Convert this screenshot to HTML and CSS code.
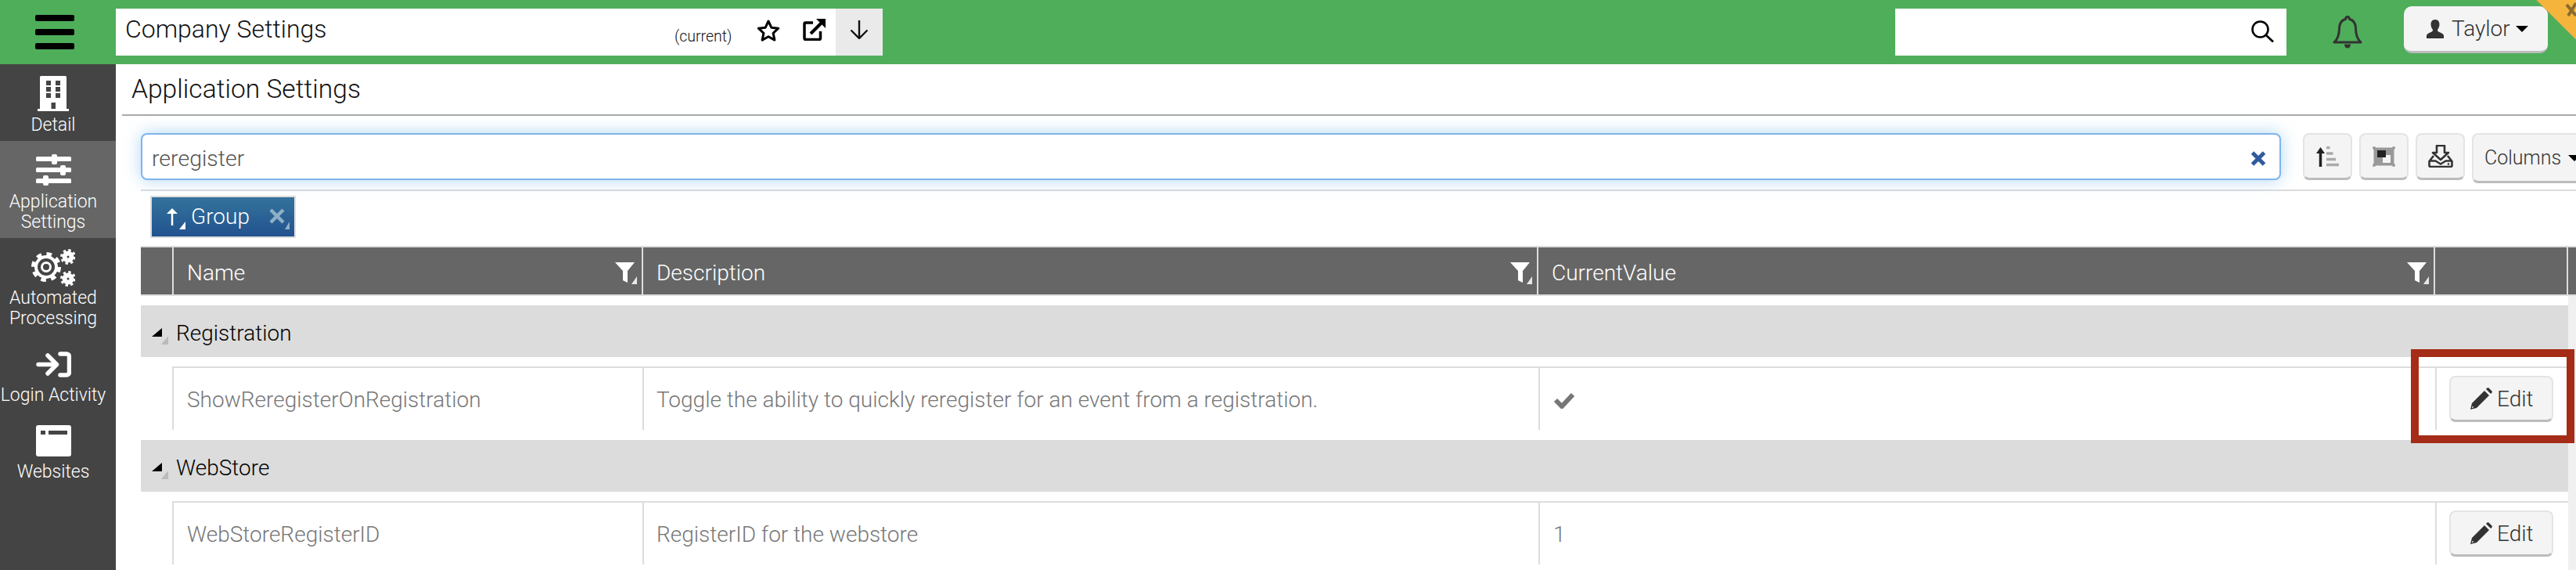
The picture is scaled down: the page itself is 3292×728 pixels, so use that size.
FILE: index.html
```html
<!DOCTYPE html>
<html lang="en">
<head>
<meta charset="utf-8">
<title>Application Settings</title>
<link rel="stylesheet" href="styles.css">
</head>
<body>
<div class="app">
  <header class="topbar">
    <div class="burger-cell">
      <div class="burger"><span></span><span></span><span></span></div>
    </div>
    <div class="titlebox">
      <span class="title-text">Company Settings</span>
      <span class="title-current">(current)</span>
      <svg class="ic-star" viewBox="0 0 30 28"><path d="M15 2l3.800 8.200 8.900 1-6.600 6.100 1.800 8.800L15 21.700l-7.900 4.400 1.800-8.800-6.600-6.100 8.900-1z" fill="none" stroke="#000" stroke-width="3" stroke-linejoin="round"/></svg>
      <svg class="ic-ext" viewBox="0 0 29 28"><path d="M13 5H3.500A1.500 1.500 0 0 0 2 6.500V25a1.500 1.500 0 0 0 1.500 1.500H21a1.500 1.500 0 0 0 1.500-1.500V16" fill="none" stroke="#000" stroke-width="3.500"/><path d="M10 19L24 5" stroke="#000" stroke-width="4" fill="none"/><path d="M17 0h12v12z"/></svg>
      <div class="title-down"><svg viewBox="0 0 24 24"><path d="M12 0v23M1.500 12.500L12 23 22.500 12.500" fill="none" stroke="#111" stroke-width="2.400"/></svg></div>
    </div>
    <div class="topbar-space"></div>
    <div class="globalsearch">
      <svg viewBox="0 0 29 28"><circle cx="11.500" cy="11.500" r="10" fill="none" stroke="#000" stroke-width="2.600"/><path d="M18.500 18.500L28 27.500" stroke="#000" stroke-width="2.800"/></svg>
    </div>
    <svg class="ic-bell" viewBox="0 0 38 42"><path d="M19 1.500c-1.500 0-2.300 1-2.300 2.800C11 6 8.500 10.500 8.500 16c0 7-1.500 13.500-6.500 18h34c-5-4.500-6.500-11-6.500-18 0-5.500-2.500-10-8.200-11.700 0-1.800-.8-2.800-2.300-2.800z" fill="none" stroke="#333" stroke-width="3" stroke-linejoin="round"/><path d="M15 36.500h8c0 3-1.500 5-4 5s-4-2-4-5z" fill="#333"/></svg>
    <button class="userbtn">
      <svg class="ic-person" viewBox="0 0 24 24"><path d="M12 0c3.800 0 5.500 2.800 5.500 6 0 2.800-1 5-2.200 6.500-.6.800-.4 2 .6 2.700 2.500 1.500 6.100 2.300 7.100 4.800V24H1v-4c1-2.500 4.600-3.300 7.100-4.800 1-.7 1.200-1.900.6-2.700C7.500 11 6.500 8.800 6.500 6c0-3.200 1.700-6 5.500-6z" fill="#333"/></svg>
      <span>Taylor</span><i class="caret"></i>
    </button>
    <svg class="ribbon" viewBox="0 0 52 52"><path d="M1 0h51v51z" fill="#c9a04a"/><path d="M2 0h50v50z" fill="#f5b53d"/><path d="M40 6l12 14M52 4L42 20" stroke="#8a6a33" stroke-width="4" fill="none"/></svg>
  </header>
  <div class="below">
    <nav class="sidenav">
      <a class="nav-item nav-detail">
        <svg class="nav-ic" width="40" height="45" viewBox="0 0 40 45"><path d="M3 1.500A1.500 1.500 0 0 1 4.500 0h31A1.500 1.500 0 0 1 37 1.500V42h3v3H0v-3h3z" fill="#fff"/><path d="M11 6h6v6h-6zM23 6h6v6h-6zM11 14h6v6h-6zM23 14h6v6h-6zM11 22h6v6h-6zM23 22h6v6h-6zM17.500 34h5.500v8h-5.500z" fill="#444"/></svg>
        <span class="nav-label">Detail</span>
      </a>
      <a class="nav-item nav-app active">
        <svg class="nav-ic" width="45" height="40" viewBox="0 0 45 40"><g fill="#fff"><rect y="3" width="45" height="6" rx="1.500"/><rect x="20" width="7" height="13" rx="2"/><rect y="17" width="45" height="6" rx="1.500"/><rect x="31" y="14" width="7" height="13" rx="2"/><rect y="31" width="45" height="6" rx="1.500"/><rect x="9" y="27" width="7" height="13" rx="2"/></g></svg>
        <span class="nav-label">Application<br>Settings</span>
      </a>
      <a class="nav-item nav-auto">
        <svg class="nav-ic" width="56" height="48" viewBox="0 0 56 48"><g fill="none" stroke="#fff"><circle cx="19" cy="23" r="13" stroke-width="4"/><circle cx="19" cy="23" r="16.500" stroke-width="5" stroke-dasharray="6.500 6.460"/><circle cx="19" cy="23" r="5.500" stroke-width="3"/><circle cx="47" cy="10" r="4.500" stroke-width="6"/><circle cx="47" cy="10" r="8.300" stroke-width="3.400" stroke-dasharray="3.300 3.220"/><circle cx="47" cy="38" r="4.500" stroke-width="6"/><circle cx="47" cy="38" r="8.300" stroke-width="3.400" stroke-dasharray="3.300 3.220"/></g></svg>
        <span class="nav-label">Automated<br>Processing</span>
      </a>
      <a class="nav-item nav-login">
        <svg class="nav-ic" width="45" height="33" viewBox="0 0 45 33"><g fill="none" stroke="#fff" stroke-width="5.500" stroke-linecap="round" stroke-linejoin="round"><path d="M3 16.500h22M15 5l11.500 11.500L15 28"/><path d="M31 3h8a3.500 3.500 0 0 1 3.500 3.500v20A3.500 3.500 0 0 1 39 30h-8"/></g></svg>
        <span class="nav-label">Login Activity</span>
      </a>
      <a class="nav-item nav-web">
        <svg class="nav-ic" width="45" height="40" viewBox="0 0 45 40"><rect width="45" height="40" rx="3" fill="#fff"/><path d="M6 7h6v5H6zM16 7h24v5H16z" fill="#444"/></svg>
        <span class="nav-label">Websites</span>
      </a>
    </nav>
    <main class="main">
      <h1 class="page-title">Application Settings</h1>
      <div class="content">
        <div class="toolbar">
          <div class="filterbox">
            <input class="filterinput" type="text" value="reregister">
            <svg viewBox="0 0 20 19"><path d="M2.500 2l15 15M17.500 2l-15 15" stroke="#2f5a9e" stroke-width="5" fill="none"/></svg>
          </div>
          <button class="toolbtn">
            <svg class="tool-ic" viewBox="0 0 29 26"><path d="M5.500 26V7" stroke="#222" stroke-width="3.500"/><path d="M0 9l5.500-8 5.500 8z" fill="#222"/><path d="M13 1.500h4.500M13 9h8.500M13 16.500h12M13 23.500h16" stroke="#aaa" stroke-width="3.500"/></svg>
          </button>
          <button class="toolbtn">
            <svg class="tool-ic" viewBox="0 0 29 26"><rect x="1.500" y="1.500" width="26" height="23" fill="#999"/><circle cx="2" cy="2" r="2" fill="#999"/><circle cx="27" cy="2" r="2" fill="#999"/><circle cx="2" cy="24" r="2" fill="#999"/><circle cx="27" cy="24" r="2" fill="#999"/><rect x="13" y="11" width="10" height="10" fill="#f4f4f4"/><rect x="6" y="5" width="11" height="9" fill="#222"/></svg>
          </button>
          <button class="toolbtn">
            <svg class="tool-ic tool-ic-dl" viewBox="0 0 32 29"><path d="M11 1h10v9h5L16 19 6 10h5z" fill="none" stroke="#333" stroke-width="2.600" stroke-linejoin="round"/><path d="M7 14L1.500 21v5.500A1.500 1.500 0 0 0 3 28h26a1.500 1.500 0 0 0 1.500-1.500V21L25 14M1.500 20.500h8l6.500 4 6.500-4h8" fill="none" stroke="#333" stroke-width="2.600" stroke-linejoin="round"/><circle cx="26" cy="24.500" r="1.300" fill="#333"/></svg>
          </button>
          <button class="columnsbtn"><span>Columns</span><i class="caret"></i></button>
        </div>
        <div class="chipbar">
          <div class="chip">
            <svg class="chip-arrow" viewBox="0 0 14 22"><path d="M7 5v17" stroke="#fff" stroke-width="2.500"/><path d="M0 7l7-7 7 7z" fill="#fff"/></svg>
            <svg class="corner corner-chip" viewBox="0 0 8 10"><path d="M8 0v10H0z" fill="#fff"/></svg>
            <span class="chip-text">Group</span>
            <svg class="chip-x" viewBox="0 0 20 20"><path d="M2 2l16 16M18 2L2 18" stroke="#8fb0c8" stroke-width="4.500"/></svg>
            <svg class="corner corner-chip2" viewBox="0 0 6 10"><path d="M6 0v10H0z" fill="#8fb0c8"/></svg>
          </div>
        </div>
        <div class="grid-head">
          <div class="hcell"></div>
          <div class="hcell"><span>Name</span><svg class="ic-filter" viewBox="0 0 28 28"><path d="M0 0h25L16 11v15l-6-3V11z" fill="#fff"/><path d="M28 18v10h-7z" fill="#e8e8e8"/></svg></div>
          <div class="hcell"><span>Description</span><svg class="ic-filter" viewBox="0 0 28 28"><path d="M0 0h25L16 11v15l-6-3V11z" fill="#fff"/><path d="M28 18v10h-7z" fill="#e8e8e8"/></svg></div>
          <div class="hcell"><span>CurrentValue</span><svg class="ic-filter" viewBox="0 0 28 28"><path d="M0 0h25L16 11v15l-6-3V11z" fill="#fff"/><path d="M28 18v10h-7z" fill="#e8e8e8"/></svg></div>
          <div class="hcell"></div>
          <div class="hcell hcell-end"></div>
        </div>
        <div class="grid-scroll">
          <div class="grid-body">
            <div class="group-row">
              <svg class="ic-collapse" viewBox="0 0 21 21"><path d="M13 0v11H0z" fill="#000"/><path d="M21 10v11H12z" fill="#bbb"/></svg>
              <span>Registration</span>
            </div>
            <div class="data-row">
              <div class="dcell">ShowReregisterOnRegistration</div>
              <div class="dcell">Toggle the ability to quickly reregister for an event from a registration.</div>
              <div class="dcell"><svg class="ic-check" viewBox="0 0 28 22"><path d="M3 11l8 8L25 4" fill="none" stroke="#777" stroke-width="6"/></svg></div>
              <div class="dcell dcell-action">
                <button class="editbtn"><svg viewBox="0 0 28 28"><path d="M0 28l2-8L18 4l6 6L8 26z" fill="#333"/><path d="M20 2l1.500-1.500a1.500 1.500 0 0 1 2 0l4 4a1.500 1.500 0 0 1 0 2L26 8z" fill="#333"/><path d="M2.500 24.500l1 1" stroke="#f4f4f4" stroke-width="2"/></svg><span>Edit</span></button>
              </div>
              <div class="callout"></div>
            </div>
            <div class="group-row">
              <svg class="ic-collapse" viewBox="0 0 21 21"><path d="M13 0v11H0z" fill="#000"/><path d="M21 10v11H12z" fill="#bbb"/></svg>
              <span>WebStore</span>
            </div>
            <div class="data-row">
              <div class="dcell">WebStoreRegisterID</div>
              <div class="dcell">RegisterID for the webstore</div>
              <div class="dcell">1</div>
              <div class="dcell dcell-action">
                <button class="editbtn"><svg viewBox="0 0 28 28"><path d="M0 28l2-8L18 4l6 6L8 26z" fill="#333"/><path d="M20 2l1.500-1.500a1.500 1.500 0 0 1 2 0l4 4a1.500 1.500 0 0 1 0 2L26 8z" fill="#333"/><path d="M2.500 24.500l1 1" stroke="#f4f4f4" stroke-width="2"/></svg><span>Edit</span></button>
              </div>
            </div>
          </div>
          <div class="scrolltrack"></div>
        </div>
      </div>
    </main>
  </div>
</div>
</body>
</html>
```
FILE: styles.css
```css
* { box-sizing: border-box; }
html, body { margin: 0; padding: 0; height: 100%; overflow: hidden; background: #fff; }
body { font-family: Roboto, "Liberation Sans", sans-serif; font-weight: 300; font-size: 28px; color: #333; }
button { font: inherit; color: inherit; cursor: pointer; }
svg { display: block; flex: none; }

.app { width: 3292px; height: 728px; display: flex; flex-direction: column; overflow: hidden; }

/* top bar */
.topbar { position: relative; flex: none; height: 82px; background: #4fae5a; display: flex; align-items: center; }
.burger-cell { width: 148px; flex: none; padding-left: 45px; }
.burger { width: 50px; display: flex; flex-direction: column; gap: 10px; }
.burger span { display: block; height: 8px; border-radius: 2px; background: #000; }
.titlebox { width: 980px; height: 60px; flex: none; background: #fff; display: flex; align-items: center; padding-left: 12px; color: #111; }
.title-text { font-size: 32px; line-height: 52px; width: 702px; flex: none; align-self: flex-start; }
.title-current { font-size: 19.5px; line-height: 60px; padding-top: 11px; width: 105px; flex: none; }
.ic-star { width: 30px; height: 28px; margin-right: 29px; margin-top: -4px; }
.ic-ext { width: 29px; height: 28px; margin-right: 13px; margin-top: -6px; }
.title-down { width: 60px; height: 60px; background: #eaeaea; display: flex; align-items: center; justify-content: center; }
.title-down svg { width: 24px; height: 24px; margin-top: -6px; }
.topbar-space { flex: 1; }
.globalsearch { width: 500px; height: 60px; flex: none; background: #fff; display: flex; align-items: center; justify-content: flex-end; padding-right: 16px; }
.globalsearch svg { width: 29px; height: 28px; margin-top: -2px; }
.ic-bell { width: 38px; height: 42px; margin-left: 59px; margin-right: 53px; }
.userbtn { width: 184px; height: 60px; margin-right: 36px; margin-top: -6px; background: #f4f4f4; border: 0; border-bottom: 3px solid #bcbcbc; border-radius: 10px; display: flex; align-items: center; padding: 0 0 0 28px; color: #333; }
.ic-person { width: 24px; height: 24px; margin-right: 9px; }
.caret { display: block; width: 0; height: 0; border-left: 8px solid transparent; border-right: 8px solid transparent; border-top: 8px solid #000; margin-left: 7px; }
.ribbon { position: absolute; right: 0; top: 0; width: 52px; height: 52px; }

/* layout below the bar */
.below { flex: 1; display: flex; min-height: 0; }
.sidenav { width: 148px; flex: none; background: #444; color: #fff; font-size: 23px; line-height: 26px; }
.nav-item { display: flex; flex-direction: column; align-items: center; padding-right: 12px; text-align: center; }
.nav-item.active { background: #666; }
.nav-detail { height: 98px; padding-top: 15px; }
.nav-app { height: 124px; padding-top: 17px; }
.nav-auto { height: 127px; padding-top: 14px; }
.nav-login { height: 99px; padding-top: 18px; }
.nav-web { padding-top: 13px; }
.nav-label { display: block; white-space: nowrap; }
.nav-detail .nav-label { margin-top: 5px; }
.nav-app .nav-label { margin-top: 8px; }
.nav-auto .nav-label { margin-top: 2px; }
.nav-login .nav-label { margin-top: 10px; }
.nav-web .nav-label { margin-top: 7px; }

.main { flex: 1; min-width: 0; padding-left: 8px; overflow: hidden; }
.page-title { margin: 0; height: 66px; padding-left: 12px; font-size: 33.6px; font-weight: 300; line-height: 64px; color: #111; border-bottom: 2px solid #aaa; }
.content { margin-left: 24px; margin-top: 22px; width: 3112px; }

/* toolbar */
.toolbar { display: flex; align-items: flex-start; border-bottom: 2px solid #ddd; height: 74px; }
.filterbox { width: 2735px; height: 60px; flex: none; border: 2px solid #7fb5ec; border-radius: 8px; box-shadow: 0 0 20px rgba(102,175,233,.5); background: #fff; display: flex; align-items: center; padding: 0 17px 0 12px; }
.filterinput { flex: 1; min-width: 0; border: 0; outline: 0; background: transparent; padding: 4px 0 0; font: inherit; font-size: 28.5px; color: #555; }
.filterbox svg { width: 20px; height: 19px; margin-top: 4px; }
.toolbtn { width: 63px; height: 60px; flex: none; margin-left: 9px; padding: 0; background: #f4f4f4; border: 2px solid #e4e4e4; border-bottom: 3px solid #bcbcbc; border-radius: 8px; display: flex; align-items: center; justify-content: center; }
.toolbtn:first-of-type { margin-left: 28px; }
.tool-ic { width: 29px; height: 26px; }
.tool-ic-dl { width: 32px; height: 29px; }
.columnsbtn { width: 150px; height: 64px; flex: none; margin-left: 9px; background: #f4f4f4; border: 2px solid #e4e4e4; border-bottom: 3px solid #bcbcbc; border-radius: 8px; display: flex; align-items: center; padding: 0 0 0 14px; color: #333; font-size: 25px; }
.columnsbtn .caret { margin-left: 9px; }

/* group chip */
.chipbar { height: 70px; padding: 6px 0 0 12px; }
.chip { width: 186px; height: 54px; border: 2px solid #ddd; background: linear-gradient(#33739c, #22528f); color: #fff; display: flex; align-items: center; padding-left: 19px; }
.chip-arrow { width: 14px; height: 22px; margin-top: 0; }
.corner { align-self: flex-end; }
.corner-chip { width: 8px; height: 10px; margin: 0 7px 9px 2px; }
.chip-text { line-height: 1; margin-right: 25px; }
.chip-x { width: 20px; height: 20px; margin-top: -2px; }
.corner-chip2 { width: 6px; height: 10px; margin-bottom: 9px; }

/* grid */
.grid-head { display: grid; grid-template-columns: 42px 600px 1144px 1146px 170px 10px; height: 64px; border-top: 2px solid #ddd; border-bottom: 2px solid #ddd; background: #666; color: #fff; }
.hcell { border-right: 2px solid #ddd; display: flex; align-items: center; justify-content: space-between; padding: 4px 6px 0 17px; }
.hcell-end { border-right: 0; padding: 0; }
.ic-filter { width: 28px; height: 28px; margin-top: 2px; }
.grid-scroll { display: flex; }
.grid-body { width: 3102px; flex: none; padding-top: 12px; }
.scrolltrack { flex: 1; height: 400px; background: #f0f0f0; }
.group-row { height: 66px; background: #dcdcdc; display: flex; align-items: center; padding: 4px 0 0 14px; color: #000; }
.ic-collapse { width: 21px; height: 21px; margin-right: 10px; margin-top: 8px; }
.data-row { position: relative; margin: 12px 0 13px 40px; height: 81px; border-top: 2px solid #ddd; display: grid; grid-template-columns: 601px 1145px 1146px 170px; color: #777; }
.dcell { border-left: 2px solid #ddd; padding: 2px 0 0 17px; display: flex; align-items: center; height: 79px; white-space: nowrap; }
.dcell:nth-child(2) { padding-left: 16px; }
.dcell-action { padding-left: 16px; align-items: flex-start; padding-top: 10px; color: #333; }
.ic-check { width: 28px; height: 22px; margin-left: 0; }
.editbtn { width: 133px; height: 59px; background: #f4f4f4; border: 2px solid #e4e4e4; border-bottom: 3px solid #bcbcbc; border-radius: 8px; padding: 0 0 0 25px; display: flex; align-items: center; color: #333; }
.editbtn svg { width: 28px; height: 28px; margin-right: 6px; }
.callout { position: absolute; left: 2861px; top: -24px; width: 209px; height: 120px; border: 10px solid #a52c16; }
```
